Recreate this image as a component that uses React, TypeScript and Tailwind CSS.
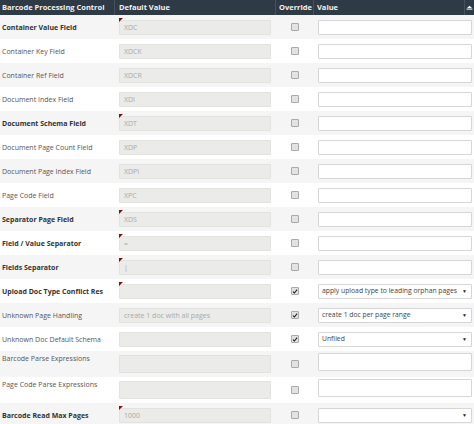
type Row = {
  label: string
  def?: string
  bold?: boolean
  checked?: boolean
  kind?: 'text' | 'select' | 'area'
  value?: string
}

const rows: Row[] = [
  { label: 'Container Value Field', def: 'XDC', bold: true },
  { label: 'Container Key Field', def: 'XDCK' },
  { label: 'Container Ref Field', def: 'XDCR' },
  { label: 'Document Index Field', def: 'XDI' },
  { label: 'Document Schema Field', def: 'XDT', bold: true },
  { label: 'Document Page Count Field', def: 'XDP' },
  { label: 'Document Page Index Field', def: 'XDPI' },
  { label: 'Page Code Field', def: 'XPC' },
  { label: 'Separator Page Field', def: 'XDS', bold: true },
  { label: 'Field / Value Separator', def: '=', bold: true },
  { label: 'Fields Separator', def: '|', bold: true },
  {
    label: 'Upload Doc Type Conflict Res',
    def: '',
    bold: true,
    checked: true,
    kind: 'select',
    value: 'apply upload type to leading orphan pages',
  },
  {
    label: 'Unknown Page Handling',
    def: 'create 1 doc with all pages',
    checked: true,
    kind: 'select',
    value: 'create 1 doc per page range',
  },
  { label: 'Unknown Doc Default Schema', def: '', checked: true, kind: 'select', value: 'Unfiled' },
  { label: 'Barcode Parse Expressions', def: '', kind: 'area' },
  { label: 'Page Code Parse Expressions', def: '', kind: 'area' },
  { label: 'Barcode Read Max Pages', def: '1000', bold: true, kind: 'select', value: '' },
]

function Check({ checked }: { checked?: boolean }) {
  return (
    <span className="flex h-[8px] w-[8px] items-center justify-center rounded-[1px] border border-[#a9a9a9] bg-[#e2e2e2]">
      {checked && (
        <svg viewBox="0 0 8 8" className="h-[7px] w-[7px]">
          <path d="M1.3 4.2 L3.2 6 L6.8 1.6" fill="none" stroke="#222" strokeWidth="1.5" />
        </svg>
      )}
    </span>
  )
}

function TableRow({ row, index }: { row: Row; index: number }) {
  const kind = row.kind ?? 'text'
  const tall = kind === 'area'
  const boxH = tall ? 'h-[18px]' : 'h-[15px]'

  return (
    <div className={`flex ${tall ? 'h-[26px]' : 'h-[24px]'} ${index % 2 === 0 ? 'bg-[#f5f5f5]' : 'bg-white'}`}>
      <div
        className={`flex w-[115px] whitespace-nowrap pl-[2px] text-[7px] ${tall ? 'items-start pt-[4px]' : 'items-center'} ${
          row.bold ? 'font-bold text-[#333]' : 'text-[#555]'
        }`}
      >
        {row.label}
      </div>
      <div className={`flex w-[161px] pl-[4px] pr-[5px] ${tall ? 'items-start pt-[4px]' : 'items-center pt-[1px]'}`}>
        <div
          className={`relative flex w-full ${boxH} items-center rounded-[1px] border border-[#e2e2df] bg-[#ebebe9] pl-[4px] text-[#aaa]`}
        >
          {row.bold && (
            <span className="absolute -left-[1px] -top-[3px] h-0 w-0 border-r-[4px] border-t-[4px] border-r-transparent border-t-[#7d1111]" />
          )}
          {row.def}
        </div>
      </div>
      <div className={`flex w-[38px] justify-center ${tall ? 'items-start pt-[9px]' : 'items-center'}`}>
        <Check checked={row.checked} />
      </div>
      <div className={`flex flex-1 pl-[4px] pr-[2px] ${tall ? 'items-start pt-[2px]' : 'items-center'}`}>
        <div
          className={`flex w-full ${boxH} items-center justify-between rounded-[1px] border border-[#d6d6d6] bg-white pl-[3px] pr-[4px] text-[6.8px] text-[#444]`}
        >
          <span>{row.value}</span>
          {kind === 'select' && <span className="text-[5px] text-[#222]">▼</span>}
        </div>
      </div>
    </div>
  )
}

export default function App() {
  return (
    <div className="h-[424px] w-[474px] overflow-hidden bg-white font-['Open_Sans',sans-serif] text-[7px] leading-none">
      <div className="flex h-[15px] whitespace-nowrap bg-[#2e3a46] text-[7.5px] font-bold text-[#f2f2f2]">
        <div className="flex w-[115px] items-center border-r border-[#45525e] pl-[2px]">Barcode Processing Control</div>
        <div className="flex w-[161px] items-center border-r border-[#45525e] pl-[4px]">Default Value</div>
        <div className="flex w-[38px] items-center border-r border-[#45525e] pl-[3px]">Override</div>
        <div className="flex flex-1 items-center border-r border-[#45525e] pl-[3px]">Value</div>
        <div className="flex w-[9px] items-center justify-center">
          <svg viewBox="0 0 8 6" className="h-[5px] w-[7px]">
            <path d="M1 3.6 L4 0.8 L7 3.6 Z" fill="#fff" />
            <rect x="0.5" y="4.3" width="7" height="1.2" fill="#fff" />
          </svg>
        </div>
      </div>
      {rows.map((row, i) => (
        <TableRow key={row.label} row={row} index={i} />
      ))}
    </div>
  )
}
